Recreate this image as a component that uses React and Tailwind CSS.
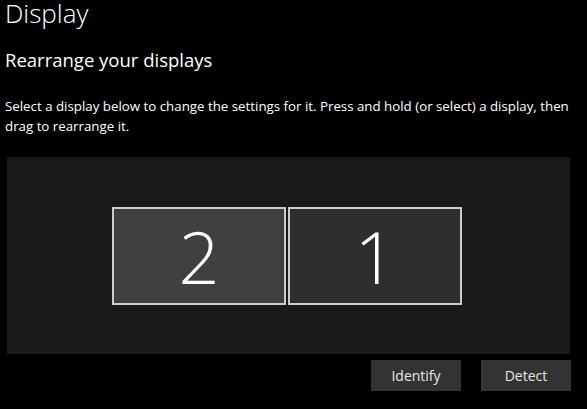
import React from "react";

const Monitor = ({ label, shade }) => {
  return (
    <div
      className={`w-[174px] h-[98px] border-2 border-[#cccccc] flex items-center justify-center ${shade}`}
    >
      <span className="text-[72px] leading-none font-light text-white">
        {label}
      </span>
    </div>
  );
};

const App = () => {
  return (
    <div className="w-[587px] h-[409px] bg-black text-white overflow-hidden font-['Open_Sans',sans-serif]">
      <h1 className="pl-[5px] text-[26px] leading-[26px] font-light">
        Display
      </h1>
      <h2 className="pl-[5px] mt-[22px] text-[18.5px] leading-[24px]">
        Rearrange your displays
      </h2>
      <p className="pl-[5px] mt-[24px] text-[13.3px] leading-[20px]">
        Select a display below to change the settings for it. Press and hold
        (or select) a display, then drag to rearrange it.
      </p>

      <div className="ml-[7px] mt-[21px] w-[563px] h-[197px] pr-[3px] bg-[#191919] flex items-center justify-center gap-[2px]">
        <Monitor label="2" shade="bg-[#404040]" />
        <Monitor label="1" shade="bg-[#2e2e2e]" />
      </div>

      <div className="w-[571px] mt-[6px] flex justify-end gap-[20px]">
        <button className="w-[90px] h-[31px] bg-[#333333] text-[14px] text-[#e6e6e6]">
          Identify
        </button>
        <button className="w-[90px] h-[31px] bg-[#333333] text-[14px] text-[#e6e6e6]">
          Detect
        </button>
      </div>
    </div>
  );
};

export default App;
